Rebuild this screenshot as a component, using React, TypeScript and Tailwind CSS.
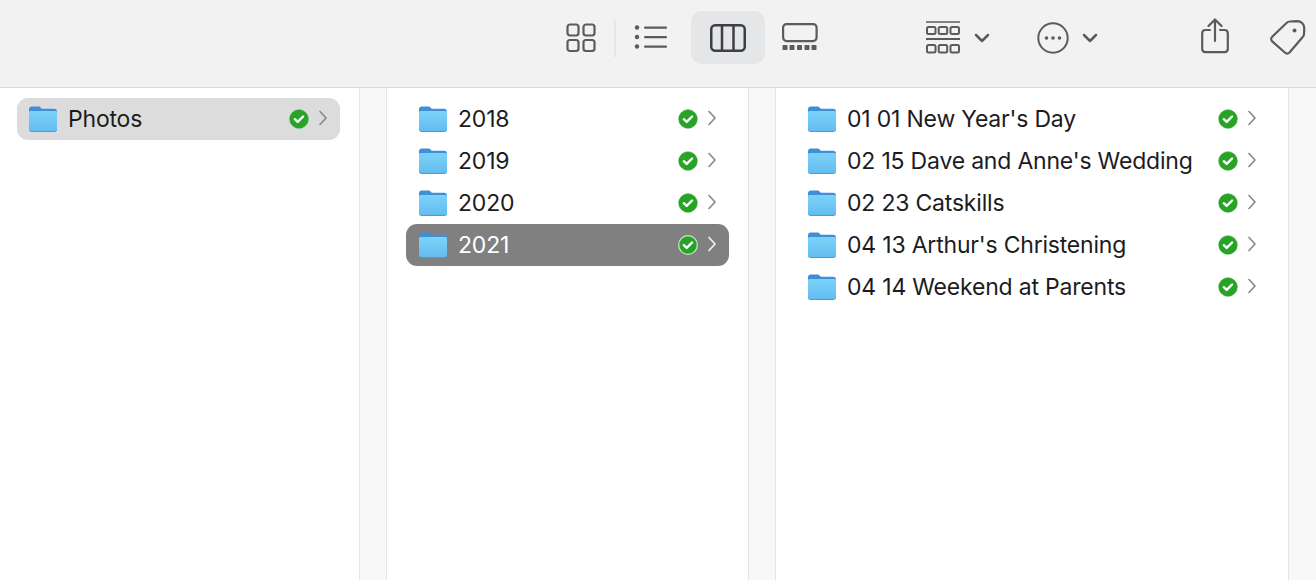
import React from 'react';

const Folder: React.FC = () => (
  <svg width="30" height="28" viewBox="0 0 30 28" className="shrink-0">
    <defs>
      <linearGradient id="folderBody" x1="0" y1="0" x2="0" y2="1">
        <stop offset="0" stopColor="#7dd2f9" />
        <stop offset="1" stopColor="#62bdef" />
      </linearGradient>
    </defs>
    <path d="M1 4.500C1 2.600 2 1.500 3.800 1.500h6.400c1.200 0 1.900.5 2.600 1.200l1 1h12.400c1.700 0 2.800 1.100 2.800 2.800V12H1z" fill="#3f8fd6" />
    <path d="M1 7.500c0-1 .7-1.600 1.600-1.600h24.800c.9 0 1.600.6 1.600 1.600v16.700c0 1.700-1 2.800-2.700 2.800H3.700C2 27 1 25.900 1 24.200z" fill="#4a9bdb" />
    <path d="M1 7.500c0-1 .7-1.600 1.600-1.600h24.800c.9 0 1.600.6 1.600 1.600v16c0 1.500-.9 2.400-2.400 2.400H3.400C1.900 25.900 1 25 1 23.500z" fill="url(#folderBody)" />
  </svg>
);

const Check: React.FC<{ ring?: boolean }> = ({ ring }) => (
  <svg width="20" height="20" viewBox="0 0 20 20" className="shrink-0">
    <circle cx="10" cy="10" r="9.300" fill="#27a326" stroke={ring ? '#c9e8c6' : '#2ea82c'} strokeWidth={ring ? 1.200 : 0.600} />
    <path d="M5.800 10.200l2.900 2.700 5.400-5.400" fill="none" stroke="#fff" strokeWidth="2.400" strokeLinecap="round" strokeLinejoin="round" />
  </svg>
);

const Chevron: React.FC<{ light?: boolean }> = ({ light }) => (
  <svg width="10" height="16" viewBox="0 0 10 16" className="shrink-0">
    <path d="M2 1.500l6 6.500-6 6.500" fill="none" stroke={light ? '#f2f2f2' : '#8a8a8c'} strokeWidth="1.700" strokeLinecap="round" strokeLinejoin="round" />
  </svg>
);

type RowProps = {
  label: string;
  state?: 'none' | 'soft' | 'strong';
  wide?: boolean;
};

const Row: React.FC<RowProps> = ({ label, state = 'none', wide }) => {
  const strong = state === 'strong';
  let bg = '';
  if (state === 'soft') bg = 'bg-[#dcdcdc]';
  if (strong) bg = 'bg-[#808080]';
  return (
    <div className={`h-[42px] flex items-center rounded-[11px] pr-[11px] ${wide ? 'pl-[12px]' : 'pl-[11px]'} ${bg}`}>
      <Folder />
      <span className={`ml-[10px] pt-[1px] flex-1 text-[23px] whitespace-nowrap tracking-[-0.2px] font-['Inter',sans-serif] ${strong ? 'text-white' : 'text-[#1c1c1e]'}`}>
        {label}
      </span>
      <Check ring={strong} />
      <div className="ml-[9px] mr-[1px] -mt-[2px] flex">
        <Chevron light={strong} />
      </div>
    </div>
  );
};

const Gap: React.FC<{ w: string }> = ({ w }) => (
  <div className={`${w} shrink-0 bg-[#f8f8f8] border-x border-[#e4e4e4]`} />
);

const GridIcon = () => (
  <svg width="30" height="30" viewBox="0 0 30 30" fill="none" stroke="#5b5b5d" strokeWidth="2.200">
    <rect x="1.500" y="1.500" width="11" height="11" rx="2.500" />
    <rect x="17.500" y="1.500" width="11" height="11" rx="2.500" />
    <rect x="1.500" y="17" width="11" height="11" rx="2.500" />
    <rect x="17.500" y="17" width="11" height="11" rx="2.500" />
  </svg>
);

const ListIcon = () => (
  <svg width="34" height="26" viewBox="0 0 34 26" fill="#5b5b5d">
    <circle cx="3" cy="3.500" r="2.200" />
    <circle cx="3" cy="13" r="2.200" />
    <circle cx="3" cy="22.500" r="2.200" />
    <rect x="10" y="2.500" width="23" height="2.200" rx="1" />
    <rect x="10" y="12" width="23" height="2.200" rx="1" />
    <rect x="10" y="21.500" width="23" height="2.200" rx="1" />
  </svg>
);

const ColumnsIcon = () => (
  <svg width="36" height="28" viewBox="0 0 36 28" fill="none" stroke="#3f3f41" strokeWidth="2.500">
    <rect x="1.250" y="1.250" width="33.500" height="25.500" rx="4" />
    <path d="M12 1.500v25M23.500 1.500v25" />
  </svg>
);

const GalleryIcon = () => (
  <svg width="36" height="28" viewBox="0 0 36 28" fill="none">
    <rect x="1.100" y="1.100" width="33.500" height="17" rx="3.500" stroke="#5b5b5d" strokeWidth="2.200" />
    <g fill="#5b5b5d">
      <rect x="0.500" y="22" width="5" height="5" rx="0.800" />
      <rect x="7.500" y="22" width="5" height="5" rx="0.800" />
      <rect x="15" y="22" width="5" height="5" rx="0.800" />
      <rect x="22.500" y="22" width="5" height="5" rx="0.800" />
      <rect x="29.500" y="22" width="5" height="5" rx="0.800" />
    </g>
  </svg>
);

const GroupIcon = () => (
  <svg width="34" height="33" viewBox="0 0 34 33" fill="none" stroke="#5b5b5d" strokeWidth="2">
    <path d="M0 1h34" strokeWidth="1.600" />
    <rect x="1" y="6" width="8.500" height="7" rx="1.500" />
    <rect x="12.700" y="6" width="8.500" height="7" rx="1.500" />
    <rect x="24.500" y="6" width="8.500" height="7" rx="1.500" />
    <path d="M0 18h34" strokeWidth="2.200" />
    <rect x="1" y="24" width="8.500" height="7.500" rx="1.500" />
    <rect x="12.700" y="24" width="8.500" height="7.500" rx="1.500" />
    <rect x="24.500" y="24" width="8.500" height="7.500" rx="1.500" />
  </svg>
);

const DownChevron = () => (
  <svg width="16" height="12" viewBox="0 0 16 12" fill="none" stroke="#5b5b5d" strokeWidth="2.500" strokeLinecap="round" strokeLinejoin="round">
    <path d="M2 3l6 6 6-6" />
  </svg>
);

const MoreIcon = () => (
  <svg width="32" height="32" viewBox="0 0 32 32" fill="none">
    <circle cx="16" cy="16" r="14.700" stroke="#5b5b5d" strokeWidth="2" />
    <g fill="#5b5b5d">
      <circle cx="9.500" cy="16" r="1.800" />
      <circle cx="16" cy="16" r="1.800" />
      <circle cx="22.500" cy="16" r="1.800" />
    </g>
  </svg>
);

const ShareIcon = () => (
  <svg width="28" height="36" viewBox="0 0 28 36" fill="none" stroke="#5b5b5d" strokeWidth="2.200" strokeLinecap="round" strokeLinejoin="round">
    <path d="M9 12H4.500C2.500 12 1.200 13.300 1.200 15.300v15.500c0 2 1.300 3.300 3.300 3.300h19c2 0 3.300-1.300 3.300-3.300V15.300c0-2-1.300-3.300-3.300-3.300H19" />
    <path d="M14 23V2M7.500 8L14 1.500 20.500 8" />
  </svg>
);

const TagIcon = () => (
  <svg width="36" height="36" viewBox="0 0 36 36" fill="none">
    <path d="M2.200 16.700L16.500 3c1-1 2-1.500 3.300-1.500l7.500-.3c2.500 0 3.500.5 5 2 1.500 1.500 2 2.500 2 5l-.3 5.800c0 1.300-.5 2.300-1.500 3.300L19.500 32.500c-1.400 1.400-3.300 1.400-4.700 0L2.200 21.400c-1.400-1.300-1.400-3.300 0-4.700z" stroke="#5b5b5d" strokeWidth="2.200" strokeLinejoin="round" />
    <circle cx="24.500" cy="10.500" r="2" fill="#5b5b5d" />
  </svg>
);

const years = ['2018', '2019', '2020'];
const events = [
  '01 01 New Year\'s Day',
  '02 15 Dave and Anne\'s Wedding',
  '02 23 Catskills',
  '04 13 Arthur\'s Christening',
  '04 14 Weekend at Parents',
];

export default function App() {
  return (
    <div className="w-[1316px] h-[580px] overflow-hidden flex flex-col bg-white">
      <div className="h-[88px] shrink-0 bg-[#f2f2f2] border-b border-[#d9d9d9] flex items-start">
        <div className="ml-[566px] mt-[23px]"><GridIcon /></div>
        <div className="ml-[18px] mt-[20px] w-[2px] h-[37px] bg-[#e6e6e6]" />
        <div className="ml-[18px] mt-[24px]"><ListIcon /></div>
        <div className="ml-[23px] mt-[11px] w-[74px] h-[53px] rounded-[10px] bg-[#e5e6e8] flex items-center justify-center">
          <ColumnsIcon />
        </div>
        <div className="ml-[17px] mt-[23px]"><GalleryIcon /></div>
        <div className="ml-[108px] mt-[21px]"><GroupIcon /></div>
        <div className="ml-[14px] mt-[32px]"><DownChevron /></div>
        <div className="ml-[47px] mt-[22px]"><MoreIcon /></div>
        <div className="ml-[13px] mt-[32px]"><DownChevron /></div>
        <div className="ml-[103px] mt-[18px]"><ShareIcon /></div>
        <div className="ml-[41px] mt-[20px]"><TagIcon /></div>
      </div>
      <div className="flex-1 flex min-h-0">
        <div className="w-[359px] shrink-0 pl-[17px] pr-[19px] pt-[10px]">
          <Row label="Photos" state="soft" />
        </div>
        <Gap w="w-[28px]" />
        <div className="w-[361px] shrink-0 pl-[19px] pr-[19px] pt-[10px]">
          {years.map((y) => (
            <Row key={y} label={y} wide />
          ))}
          <Row label="2021" state="strong" wide />
        </div>
        <Gap w="w-[28px]" />
        <div className="w-[512px] shrink-0 pl-[19px] pr-[19px] pt-[10px]">
          {events.map((e) => (
            <Row key={e} label={e} wide />
          ))}
        </div>
        <div className="flex-1 bg-[#f8f8f8] border-l border-[#e4e4e4]" />
      </div>
    </div>
  );
}
